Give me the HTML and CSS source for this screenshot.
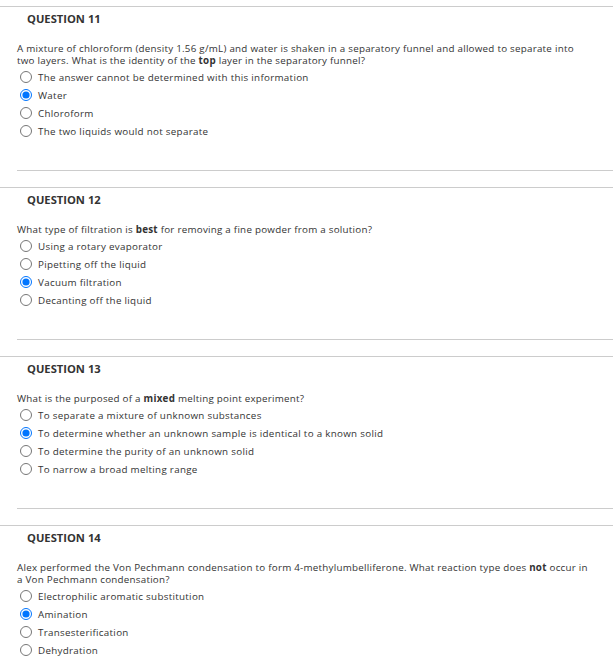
FILE: index.html
```html
<!DOCTYPE html>
<html>
<head>
<meta charset="utf-8">
<link rel="stylesheet" href="styles.css">
</head>
<body>
<div class="page">
  <section class="question">
    <h2 class="q-title">QUESTION 11</h2>
    <p class="q-text">A mixture of chloroform (density 1.56 g/mL) and water is shaken in a separatory funnel and allowed to separate into two layers. What is the identity of the <b>top</b> layer in the separatory funnel?</p>
    <ul class="options">
      <li><label><input type="radio" name="q11"> The answer cannot be determined with this information</label></li>
      <li><label><input type="radio" name="q11" checked> Water</label></li>
      <li><label><input type="radio" name="q11"> Chloroform</label></li>
      <li><label><input type="radio" name="q11"> The two liquids would not separate</label></li>
    </ul>
    <div class="inner-rule"></div>
  </section>
  <section class="question">
    <h2 class="q-title">QUESTION 12</h2>
    <p class="q-text">What type of filtration is <b>best</b> for removing a fine powder from a solution?</p>
    <ul class="options">
      <li><label><input type="radio" name="q12"> Using a rotary evaporator</label></li>
      <li><label><input type="radio" name="q12"> Pipetting off the liquid</label></li>
      <li><label><input type="radio" name="q12" checked> Vacuum filtration</label></li>
      <li><label><input type="radio" name="q12"> Decanting off the liquid</label></li>
    </ul>
    <div class="inner-rule"></div>
  </section>
  <section class="question">
    <h2 class="q-title">QUESTION 13</h2>
    <p class="q-text">What is the purposed of a <b>mixed</b> melting point experiment?</p>
    <ul class="options">
      <li><label><input type="radio" name="q13"> To separate a mixture of unknown substances</label></li>
      <li><label><input type="radio" name="q13" checked> To determine whether an unknown sample is identical to a known solid</label></li>
      <li><label><input type="radio" name="q13"> To determine the purity of an unknown solid</label></li>
      <li><label><input type="radio" name="q13"> To narrow a broad melting range</label></li>
    </ul>
    <div class="inner-rule"></div>
  </section>
  <section class="question">
    <h2 class="q-title">QUESTION 14</h2>
    <p class="q-text">Alex performed the Von Pechmann condensation to form 4-methylumbelliferone. What reaction type does <b>not</b> occur in a Von Pechmann condensation?</p>
    <ul class="options">
      <li><label><input type="radio" name="q14"> Electrophilic aromatic substitution</label></li>
      <li><label><input type="radio" name="q14" checked> Amination</label></li>
      <li><label><input type="radio" name="q14"> Transesterification</label></li>
      <li><label><input type="radio" name="q14"> Dehydration</label></li>
    </ul>
    <div class="inner-rule"></div>
  </section>
</div>
</body>
</html>
```

FILE: styles.css
```css
html, body {
  margin: 0;
  padding: 0;
  background: #ffffff;
}
body {
  font-family: "Open Sans", "Liberation Sans", sans-serif;
  color: #333333;
}
.page {
  padding-top: 6px;
}
.question {
  border-top: 1px solid #cccccc;
  padding-top: 4px;
}
.q-title {
  margin: 0 0 0 27px;
  font-size: 11.2px;
  line-height: 16px;
  font-weight: 700;
  color: #333333;
}
.q-text {
  margin: 16px 23px 0 17px;
  font-size: 9.8px;
  letter-spacing: 0.25px;
  line-height: 12px;
}
.q-text b {
  font-weight: 700;
}
.options {
  list-style: none;
  margin: 1px 0 0 0;
  padding: 0 0 0 20px;
}
.options li {
  height: 18px;
  display: flex;
  align-items: center;
  font-size: 9.8px;
  letter-spacing: 0.3px;
}
.options label {
  display: flex;
  align-items: center;
  gap: 6px;
}
.options input {
  margin: 0;
  width: 12px;
  height: 12px;
  accent-color: #0075ff;
}
.inner-rule {
  margin: 30px 0 16px 17px;
  border-top: 1px solid #cccccc;
}
```
